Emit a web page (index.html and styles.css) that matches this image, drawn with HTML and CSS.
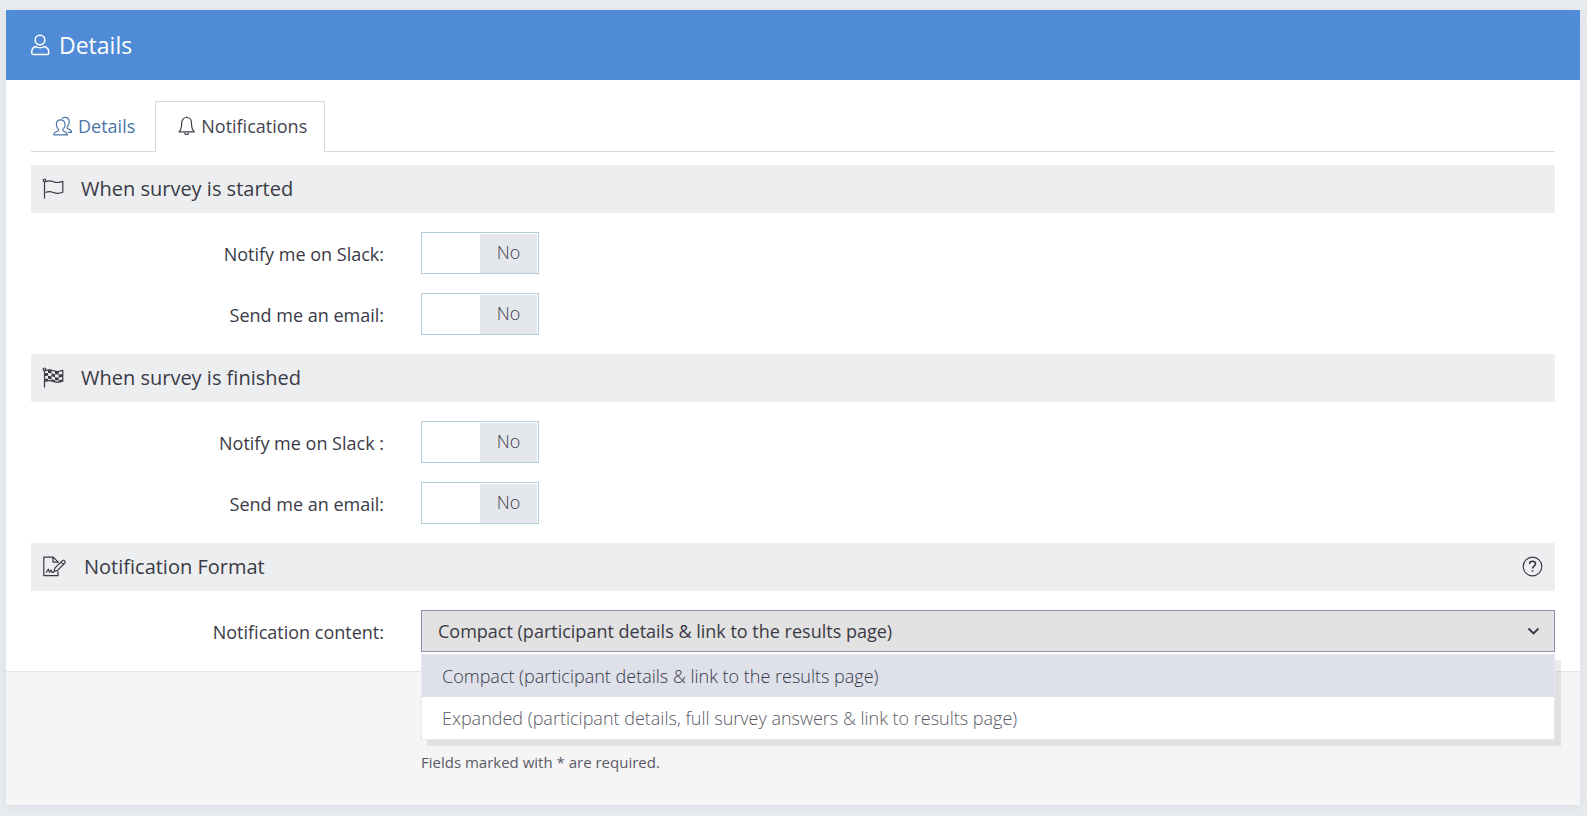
FILE: index.html
```html
<!DOCTYPE html>
<html lang="en">
<head>
<meta charset="utf-8">
<meta name="viewport" content="width=device-width, initial-scale=1">
<title>Details</title>
<link rel="stylesheet" href="styles.css">
</head>
<body>
<main class="panel">
  <header class="panel-header">
    <svg class="icon icon-user" width="20" height="22" viewBox="0 0 20 22" aria-hidden="true"><circle cx="9" cy="6" r="4.8"/><path d="M5 12.500C2.200 13.300.8 15 .8 17.500V19q0 1.500 1.500 1.500h13.900q1.500 0 1.500-1.500v-1.500c0-2.500-1.700-4.200-4.500-5-2.300 1.700-5.900 1.700-8.200 0z"/></svg>
    <h1 class="panel-title">Details</h1>
  </header>

  <form>
    <div class="panel-body">
      <nav class="tabs">
        <a class="tab" href="#details">
          <svg class="icon" width="20" height="20" viewBox="0 0 20 20" aria-hidden="true"><path d="M.8 18.900h13.500c0-2.500-1.500-3-3.500-3.700-1.400-.5-1.300-1.600-.3-2.600 1-1.100 1.500-2.300 1.500-4 0-3-1.600-4.700-4.300-4.700S3.400 5.600 3.400 8.600c0 1.700.5 2.900 1.500 4 1 1 1.100 2.100-.3 2.600C2.300 15.900.8 16.400.8 18.900z"/><path d="M8.700 2.700C9.500 1.800 10.700 1.400 11.900 1.400c2.700 0 4.300 1.700 4.300 4.600 0 1.700-.5 3-1.500 4.100-.9 1-1 2.100.4 2.600 2.100.7 3.400 1.300 3.400 3.700h-3.600"/></svg>
          Details
        </a>
        <a class="tab tab-active" href="#notifications" aria-current="page">
          <svg class="icon" width="18" height="20" viewBox="0 0 18 20" aria-hidden="true"><path d="M.9 15.800C3.200 13.500 3.700 11.500 3.700 7.500c0-3.600 1.700-6 4.900-6s4.900 2.400 4.900 6c0 4 .5 6 2.800 8.300z"/><path d="M6.500 16.300c.2 1.500 1 2.200 2.100 2.200s1.900-.7 2.100-2.200M8.600 1.500V.4"/></svg>
          Notifications
        </a>
      </nav>

      <section>
        <div class="section-bar">
          <svg class="icon" width="24" height="22" viewBox="0 0 24 22" aria-hidden="true"><circle cx="2.500" cy="2.300" r="1.300"/><path d="M2.500 3.600v17M3.500 3.700c3-1.500 5.500-1 8 0s5.500 1.300 9.300-.3v10.800c-3.800 1.600-6.800 1.300-9.300.3s-5-1.500-8 0"/></svg>
          <h2 class="section-title">When survey is started</h2>
        </div>
        <div class="rows">
          <div class="row">
            <label class="row-label" for="start-slack">Notify me on Slack:</label>
            <div class="toggle"><input class="toggle-input" type="checkbox" role="switch" id="start-slack"><span class="toggle-text">No</span></div>
          </div>
          <div class="row">
            <label class="row-label" for="start-email">Send me an email:</label>
            <div class="toggle"><input class="toggle-input" type="checkbox" role="switch" id="start-email"><span class="toggle-text">No</span></div>
          </div>
        </div>
      </section>

      <section>
        <div class="section-bar">
          <svg class="icon" width="24" height="22" viewBox="0 0 24 22" aria-hidden="true"><circle cx="2.500" cy="2.300" r="1.300"/><path d="M2.500 3.600v17M3.500 3.700c3-1.500 5.500-1 8 0s5.500 1.300 9.300-.3v10.800c-3.800 1.600-6.800 1.300-9.300.3s-5-1.500-8 0"/><path class="solid" d="M6 2.900l3.500.3v3L6 5.900zM13 4.200l3.600.5v2.800L13 7.200zM3 6.200l3-.3v2.800l-3 .4zM9.500 6.200l3.500 1v3l-3.500-1zM16.600 7.500l4-.5v2.900l-4 .5zM6 8.700l3.500.5v3L6 11.700zM13 10.200l3.600.2v3l-3.600-.2zM3 11.900l3-.2v1.700l-3 .6zM9.500 12.200l3.500 1v1.700l-3.500-1zM16.600 13.200l4-.6v1.500l-4 .9z"/></svg>
          <h2 class="section-title">When survey is finished</h2>
        </div>
        <div class="rows">
          <div class="row">
            <label class="row-label" for="finish-slack">Notify me on Slack :</label>
            <div class="toggle"><input class="toggle-input" type="checkbox" role="switch" id="finish-slack"><span class="toggle-text">No</span></div>
          </div>
          <div class="row">
            <label class="row-label" for="finish-email">Send me an email:</label>
            <div class="toggle"><input class="toggle-input" type="checkbox" role="switch" id="finish-email"><span class="toggle-text">No</span></div>
          </div>
        </div>
      </section>

      <section>
        <div class="section-bar">
          <svg class="icon" width="27" height="22" viewBox="0 0 27 22" aria-hidden="true"><path d="M16 15.200v4.500H1.800V1.200h9.500L16 5.900v1.300M11 1.200v5h5M4 16.500c1.300-1 2-2.500 2.200-3.500l1.300 3.200 1.500-2.200 1 2.300h2"/><path d="M12 15.500l1-3.600 7.500-7.300q1.200-.8 2.200.2t.2 2.200l-7.400 7.400zM19 6.100l2.400 2.400"/></svg>
          <h2 class="section-title">Notification Format</h2>
          <button class="help" type="button" aria-label="Help">
            <svg class="icon" width="22" height="22" viewBox="0 0 22 22" aria-hidden="true"><circle cx="10.500" cy="10.500" r="9.300"/><path class="mark" d="M7.500 7.900C7.600 6.200 8.800 5.300 10.500 5.300s3 1 3 2.500c0 2.200-3 2.300-3 4.600M10.500 14.200v1.600"/></svg>
          </button>
        </div>
        <div class="rows">
          <div class="row">
            <label class="row-label" for="content">Notification content:</label>
            <div class="dropdown">
              <select class="select" id="content">
                <option>Compact (participant details &amp; link to the results page)</option>
                <option>Expanded (participant details, full survey answers &amp; link to results page)</option>
              </select>
              <svg class="chevron" width="13" height="9" viewBox="0 0 13 9" aria-hidden="true"><path d="M1.500 1.500l5 5 5-5"/></svg>
              <ul class="menu" role="listbox" aria-label="Notification content">
                <li class="menu-item menu-item-active" role="option" aria-selected="true">Compact (participant details &amp; link to the results page)</li>
                <li class="menu-item" role="option" aria-selected="false">Expanded (participant details, full survey answers &amp; link to results page)</li>
              </ul>
            </div>
          </div>
        </div>
      </section>
    </div>

    <footer class="panel-footer">
      <p class="note">Fields marked with * are required.</p>
    </footer>
  </form>
</main>
</body>
</html>
```
FILE: styles.css
```css
* {
  box-sizing: border-box;
}

body {
  margin: 0;
  padding: 10px 7px 11px 6px;
  background: #e8ebef;
  color: #3a3a46;
  font-family: "Open Sans", sans-serif;
  font-size: 18px;
  line-height: 24px;
}

h1, h2, p, ul {
  margin: 0;
  padding: 0;
  font-weight: 400;
}

.icon {
  flex: none;
  fill: none;
  stroke: currentColor;
  stroke-width: 1.2;
  stroke-linejoin: round;
}

.icon-user {
  stroke-width: 1.5;
}

.icon .solid {
  fill: currentColor;
  stroke: none;
}

.icon .mark {
  stroke-width: 1.6;
}

.panel {
  background: #fff;
  box-shadow: 0 2px 10px #d9dfe5;
}

.panel-header {
  display: flex;
  align-items: center;
  gap: 8px;
  height: 70px;
  padding: 0 25px;
  background: #4f8bd6;
  color: #fff;
}

.panel-title {
  font-size: 23px;
  line-height: 32px;
}

.panel-body {
  padding: 21px 25px 0;
}

.tabs {
  display: flex;
  margin-bottom: 13px;
  border-bottom: 1px solid #d9dad7;
}

.tab {
  display: flex;
  align-items: center;
  gap: 5px;
  height: 50px;
  padding: 0 20px 0 22px;
  color: #4a76a8;
  text-decoration: none;
}

.tab-active {
  height: 51px;
  margin-bottom: -1px;
  padding: 0 17px 2px 22px;
  border: 1px solid #d9dad7;
  border-bottom: 0;
  background: #fff;
  color: #44444f;
}

.section-bar {
  display: flex;
  align-items: center;
  gap: 15px;
  height: 48px;
  padding: 0 11px;
  background: #edeef0;
}

.section-title {
  font-size: 20px;
  line-height: 28px;
}

.help {
  display: flex;
  margin-left: auto;
  padding: 0;
  border: 0;
  background: none;
  color: inherit;
}

.rows {
  display: grid;
  gap: 19px;
  padding: 19px 0;
}

.row {
  display: grid;
  grid-template-columns: calc(25% - 28px) minmax(0, 1fr);
  gap: 37px;
  align-items: center;
}

.row-label {
  padding-top: 2px;
  text-align: right;
}

.toggle {
  position: relative;
  display: flex;
  justify-content: flex-end;
  width: 118px;
  height: 42px;
  padding: 1px 1px 0 0;
  border: 1px solid #b2cedb;
}

.toggle-input {
  position: absolute;
  inset: 0;
  width: 100%;
  height: 100%;
  margin: 0;
  opacity: 0;
}

.toggle-text {
  width: 57px;
  background: #e4e7ec;
  font-weight: 300;
  line-height: 37px;
  text-align: center;
}

.dropdown {
  position: relative;
}

.select {
  display: block;
  width: 100%;
  height: 42px;
  padding: 0 40px 0 16px;
  border: 1px solid #8f8fae;
  border-radius: 0;
  outline: 0;
  background: #e2e2e2;
  color: inherit;
  font: inherit;
  appearance: none;
}

.chevron {
  position: absolute;
  top: 17px;
  right: 15px;
  fill: none;
  stroke: #38384a;
  stroke-width: 1.8;
  pointer-events: none;
}

.menu {
  position: absolute;
  top: 44px;
  left: 0;
  right: 0;
  border: 1px solid #e8e8ea;
  background: #fff;
  box-shadow: 6px 6px 0 rgba(0, 0, 0, .08);
  list-style: none;
}

.menu-item {
  padding: 9px 20px;
  color: #5a5a66;
  font-weight: 300;
}

.menu-item-active {
  background: #dee1e9;
  color: #38384a;
}

.panel-footer {
  padding: 80px 25px 32px;
  border-top: 1px solid #e5e5e5;
  background: #f5f5f5;
}

.note {
  padding-left: calc(25% + 9px);
  color: #5a5a66;
  font-size: 15px;
  line-height: 21px;
}
```
